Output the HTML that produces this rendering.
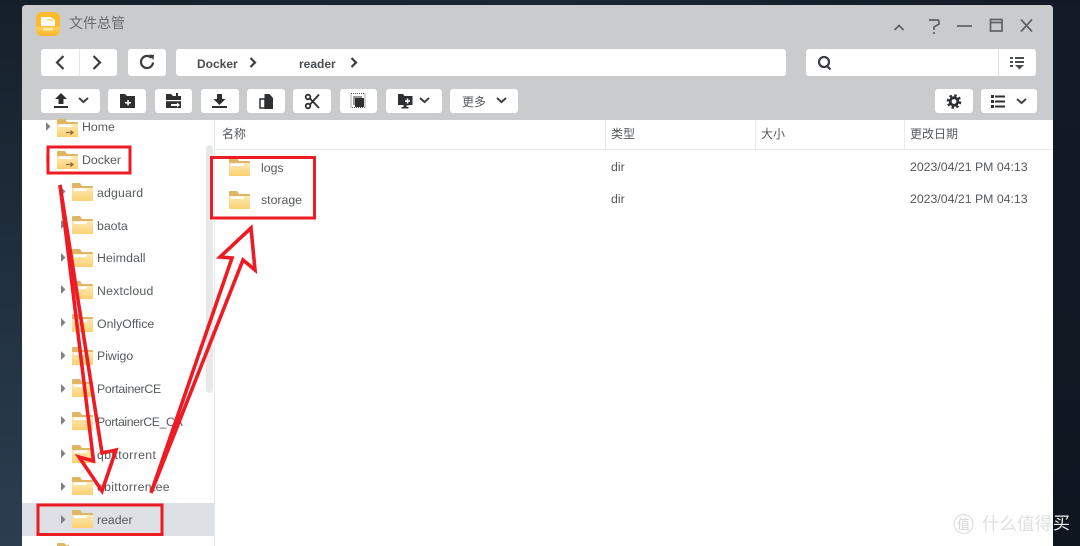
<!DOCTYPE html>
<html><head><meta charset="utf-8"><style>
html,body{margin:0;padding:0;width:1080px;height:546px;overflow:hidden;background:#111a25}
body{position:relative;font-family:"Liberation Sans","Noto Sans CJK SC",sans-serif}
#bg{position:absolute;left:0;top:0;width:1080px;height:546px;background:linear-gradient(180deg,#121b26 0,#0f1620 100%)}
#ls{position:absolute;left:0;top:0;width:22px;height:546px;background:linear-gradient(180deg,#151f2a 0,#1f2e3c 45%,#2b3e50 100%)}
#top{position:absolute;left:0;top:0;width:1080px;height:5px;background:linear-gradient(90deg,#141e29,#1a2733 50%,#111924)}
#win{position:absolute;left:22px;top:5px;width:1031px;height:541px;background:#fff;border-radius:4px 4px 0 0;overflow:hidden}
#hd{position:absolute;left:0;top:0;width:1031px;height:115px;background:#cacbcc}
.b{position:absolute;background:#fff;border-radius:3px}
.t{position:absolute;white-space:nowrap;font-size:12.3px;color:#55595d;line-height:16px}
.h{position:absolute;top:120px;height:29px;width:1px;background:#e6e9ed}
svg{position:absolute;left:0;top:0;overflow:visible}
</style></head><body>
<div id="bg"></div><div id="ls"></div><div id="top"></div>
<div id="win"><div id="hd"></div></div>

<div class="t" style="left:69px;top:14px;font-size:14px;line-height:18px;color:#666a6d">文件总管</div>

<div class="b" style="left:41px;top:49px;width:76px;height:27px"></div>
<div style="position:absolute;left:79px;top:49px;width:1px;height:27px;background:#e4e6e8"></div>
<div class="b" style="left:128px;top:49px;width:38px;height:27px"></div>
<div class="b" style="left:176px;top:49px;width:610px;height:27px"></div>
<div class="b" style="left:806px;top:49px;width:230px;height:27px"></div>
<div style="position:absolute;left:998px;top:49px;width:1px;height:27px;background:#dfe1e3"></div>
<div class="t" style="left:197px;top:56px;font-weight:bold;font-size:12px;color:#494d50">Docker</div>
<div class="t" style="left:299px;top:56px;font-weight:bold;font-size:12px;color:#494d50">reader</div>

<div class="b" style="left:41px;top:89px;width:59px;height:24px"></div>
<div class="b" style="left:108px;top:89px;width:38px;height:24px"></div>
<div class="b" style="left:155px;top:89px;width:37px;height:24px"></div>
<div class="b" style="left:201px;top:89px;width:38px;height:24px"></div>
<div class="b" style="left:247px;top:89px;width:38px;height:24px"></div>
<div class="b" style="left:293px;top:89px;width:38px;height:24px"></div>
<div class="b" style="left:340px;top:89px;width:37px;height:24px"></div>
<div class="b" style="left:386px;top:89px;width:56px;height:24px"></div>
<div class="b" style="left:450px;top:89px;width:68px;height:24px"></div>
<div class="b" style="left:935px;top:89px;width:38px;height:24px"></div>
<div class="b" style="left:981px;top:89px;width:56px;height:24px"></div>
<div class="t" style="left:462px;top:94px;font-size:12px;color:#55595c">更多</div>

<div class="h" style="left:605px"></div><div class="h" style="left:755px"></div><div class="h" style="left:904px"></div>
<div style="position:absolute;left:215px;top:149px;width:838px;height:1px;background:#e6e9ed"></div>
<div style="position:absolute;left:214px;top:120px;width:1px;height:426px;background:#e4e8ed"></div>
<div class="t" style="left:222px;top:126px;font-size:12px">名称</div>
<div class="t" style="left:611px;top:126px;font-size:12px">类型</div>
<div class="t" style="left:761px;top:126px;font-size:12px">大小</div>
<div class="t" style="left:910px;top:126px;font-size:12px">更改日期</div>

<div style="position:absolute;left:22px;top:503px;width:192px;height:33px;background:#dde1e5"></div>
<div style="position:absolute;left:206px;top:145px;width:7px;height:248px;background:#e6e8ea;border-radius:4px"></div>

<div class="t" style="left:82px;top:119px">Home</div>
<div class="t" style="left:82px;top:152px">Docker</div>
<div class="t" style="left:97px;top:185px;letter-spacing:.15px">adguard</div>
<div class="t" style="left:97px;top:218px">baota</div>
<div class="t" style="left:97px;top:250px;letter-spacing:.1px">Heimdall</div>
<div class="t" style="left:97px;top:283px;letter-spacing:.2px">Nextcloud</div>
<div class="t" style="left:97px;top:316px">OnlyOffice</div>
<div class="t" style="left:97px;top:348px">Piwigo</div>
<div class="t" style="left:97px;top:381px;letter-spacing:-.28px">PortainerCE</div>
<div class="t" style="left:97px;top:414px;letter-spacing:-.4px">PortainerCE_CA</div>
<div class="t" style="left:97px;top:447px;letter-spacing:.35px">qbittorrent</div>
<div class="t" style="left:97px;top:479px;letter-spacing:.3px">qbittorrentee</div>
<div class="t" style="left:97px;top:512px">reader</div>

<div class="t" style="left:261px;top:160px">logs</div>
<div class="t" style="left:261px;top:192px">storage</div>
<div class="t" style="left:611px;top:159px">dir</div>
<div class="t" style="left:611px;top:191px">dir</div>
<div class="t" style="left:910px;top:159px">2023/04/21 PM 04:13</div>
<div class="t" style="left:910px;top:191px">2023/04/21 PM 04:13</div>

<svg width="1080" height="546" viewBox="0 0 1080 546">
<defs>
<linearGradient id="fg" x1="0" y1="0" x2="0" y2="1"><stop offset="0" stop-color="#fdeab4"/><stop offset="1" stop-color="#fbd071"/></linearGradient>
<linearGradient id="ag" x1="0" y1="0" x2="0" y2="1"><stop offset="0" stop-color="#fdbb2a"/><stop offset=".6" stop-color="#fdb92a"/><stop offset=".62" stop-color="#fed25e"/><stop offset="1" stop-color="#fcb425"/></linearGradient>
<g id="f"><path d="M0 1a1 1 0 0 1 1-1h7l2 3h10a1 1 0 0 1 1 1v13a1 1 0 0 1-1 1H1a1 1 0 0 1-1-1z" fill="#dfb566"/><path d="M0 5h21v12a1 1 0 0 1-1 1H1a1 1 0 0 1-1-1z" fill="url(#fg)"/><path d="M2 5.500h14l-2 2.500H2z" fill="#fff"/></g>
<g id="a"><use href="#f"/><path d="M9 13.500h7M13.500 11.500l2.500 2-2.500 2" fill="none" stroke="#8a6a3c" stroke-width="1.200"/></g>
<path id="tr" d="M0 0l4.500 4.500L0 9z" fill="#7d8286"/>
<path id="chev" d="M0 0l4.500 4 4.500-4" fill="none" stroke="#3f4245" stroke-width="2"/>
</defs>

<rect x="36" y="12" width="24" height="24" rx="6" fill="url(#ag)"/>
<path d="M41 17h10l4 3v6H41z" fill="#fff"/><path d="M43 28h10v2.500H43z" fill="#ffe9a8"/><path d="M47 20h6" stroke="#fdc02f"/>

<g fill="none" stroke="#5e6164" stroke-width="1.700">
<path d="M894.500 30l4.500-4.500 4.500 4.500"/>
<path d="M929 20h9l1 1v3l-5 3v3"/><path d="M934 32v2"/>
<path d="M957 26h15"/>
<rect x="990.500" y="19.500" width="11.500" height="11.500"/><path d="M990 22.500h12"/>
<path d="M1021 19.500l11 12M1032 19.500l-11 12"/>
</g>

<g fill="none" stroke="#3a3d40" stroke-width="2.200">
<path d="M63.500 56l-6.500 6.500 6.500 6.500M93.500 56l6.500 6.500-6.500 6.500"/>
<path d="M151.500 58a6 6 0 1 0 1.500 4.500"/>
<path d="M250.500 58l4.500 4.500L250.500 67M351.500 58l4.500 4.500L351.500 67"/>
<circle cx="824" cy="62" r="5"/><path d="M827 66l3.500 3.500"/>
</g>
<path d="M149 54.500l5 .5-.5 5z" fill="#3a3d40"/>
<g fill="#4a4d50"><rect x="1010" y="57" width="3" height="2"/><rect x="1015" y="57" width="9" height="2"/><rect x="1010" y="61" width="3" height="2"/><rect x="1015" y="61" width="9" height="2"/><rect x="1010" y="65" width="3" height="2"/><path d="M1015 65h9l-4.500 4.500z"/></g>

<g fill="#2d2f31">
<path d="M61 93l-6 6h3.500v5h5v-5H67zM54 106h14v2H54z"/>
<path d="M120 94h5l2 2h8v12h-15z"/><path d="M125 102h6v1.500h-6zM127.300 100h1.500v5.500h-1.500z" fill="#fff"/>
<path d="M166 94h5l2 2h3v-3h2v3h3v12h-15z"/><path d="M166 100h15v1.200h-15z" fill="#fff"/><path d="M171 104h6v-1.500l3 2.500-3 2.500V106h-6z" fill="#fff"/>
<path d="M217 94h5v5h3.500L219.500 105 213.500 99h3.500zM212 106h15v2h-15z"/>
<path d="M260 99h5v9h-5z" fill="none" stroke="#2d2f31" stroke-width="1.500"/><path d="M264.500 94h5l3.500 4v11h-8.500z"/>
<rect x="351" y="93.500" width="14" height="14" fill="none" stroke="#555" stroke-dasharray="1 1"/><rect x="353" y="96" width="9" height="9" fill="#999"/><rect x="355" y="98" width="9" height="9"/>
<path d="M398 94h5l1.500 2h8v9h-6v2h2v1.500h-7V107h2v-2h-5.500z"/><circle cx="407.500" cy="101" r="4.500"/><path d="M406.700 98.500h1.600v1.700h1.700v1.600h-1.700v1.700h-1.600v-1.700H405v-1.600h1.700z" fill="#fff"/>
<rect x="991" y="95" width="3" height="3"/><rect x="991" y="100" width="3" height="3"/><rect x="991" y="105" width="3" height="3"/>
<rect x="995" y="95.500" width="10" height="2"/><rect x="995" y="100.500" width="10" height="2"/><rect x="995" y="105.500" width="10" height="2"/>
</g>
<g fill="none" stroke="#2d2f31">
<circle cx="954" cy="101.500" r="3.800" stroke-width="2.800"/>
<circle cx="954" cy="101.500" r="6" stroke-width="2.600" stroke-dasharray="2.400 2.312"/>
</g>
<g fill="none" stroke="#2d2f31" stroke-width="1.800"><circle cx="308" cy="97" r="2.300"/><circle cx="308" cy="106" r="2.300"/><path d="M310 98.500l9 9.500M310 104.500l9-10"/></g>
<use href="#chev" x="79" y="98"/><use href="#chev" x="420" y="98"/><use href="#chev" x="497" y="98"/><use href="#chev" x="1017" y="99"/>

<use href="#a" x="57" y="119"/><use href="#a" x="57" y="151"/>
<use href="#tr" x="46" y="122"/><use href="#tr" x="46" y="154" opacity=".4"/>
<g><use href="#f" x="72" y="183"/><use href="#f" x="72" y="216"/><use href="#f" x="72" y="249"/><use href="#f" x="72" y="281"/><use href="#f" x="72" y="314"/><use href="#f" x="72" y="347"/><use href="#f" x="72" y="379"/><use href="#f" x="72" y="412"/><use href="#f" x="72" y="445"/><use href="#f" x="72" y="477"/><use href="#f" x="72" y="510"/></g>
<g><use href="#tr" x="61" y="187"/><use href="#tr" x="61" y="220"/><use href="#tr" x="61" y="253"/><use href="#tr" x="61" y="285"/><use href="#tr" x="61" y="318"/><use href="#tr" x="61" y="351"/><use href="#tr" x="61" y="384"/><use href="#tr" x="61" y="416"/><use href="#tr" x="61" y="449"/><use href="#tr" x="61" y="482"/><use href="#tr" x="61" y="515"/></g>
<use href="#f" x="229" y="158"/><use href="#f" x="229" y="191"/>
<path d="M57 546v-2a1 1 0 0 1 1-1h6l2 2h3v1z" fill="#dfb566"/>

<g fill="none" stroke="#ed1c24" stroke-width="3">
<rect x="48" y="147" width="82" height="26"/>
<rect x="211.500" y="157.500" width="103" height="60.500"/>
<rect x="38" y="505" width="124" height="29.500"/>
</g>
<g fill="none" stroke="#ed1c24" stroke-width="3.600" stroke-linejoin="miter">
<path d="M60 185L93.500 461 79 457 102 491 116 450 102 453z"/>
<path d="M60 185L102 453" stroke-width="3"/>
<path d="M151 493L232 258 220 257 251 228 255 270 243 260z"/>
</g>

<g font-family="'Liberation Sans','Noto Sans CJK SC',sans-serif">
<circle cx="963.500" cy="524" r="9.500" fill="none" stroke="#e0e0e0" stroke-width="1.200"/>
<text x="957" y="529" font-size="13" fill="#d6d6d6">值</text>
<text x="982" y="530" font-size="17.500" fill="#e0e0e0">什么值得</text>
</g>
</svg>
<div class="t" style="left:1053px;top:514px;font-size:17px;line-height:20px;color:#f0f0f0">买</div>
</body></html>
